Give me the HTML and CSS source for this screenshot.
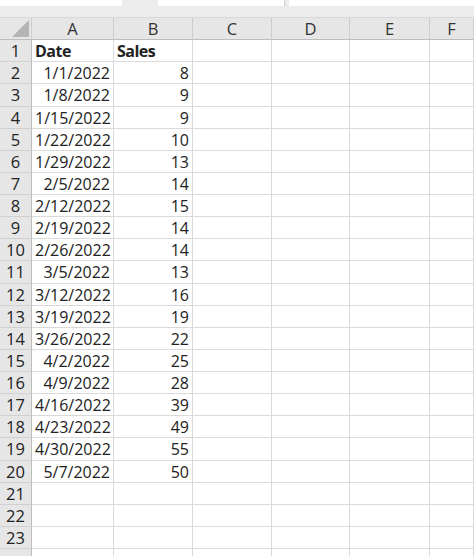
FILE: index.html
```html
<!DOCTYPE html>
<html lang="en">
<head>
    <meta charset="UTF-8">
    <meta name="viewport" content="width=device-width, initial-scale=1.0">
    <title>Sheet1</title>
    <link rel="stylesheet" href="styles.css">
</head>
<body>
    <div class="tabs">
        <div class="tab tab-name"></div>
        <div class="tab tab-formula"></div>
        <div class="tab tab-rest"></div>
    </div>

    <div class="sheet">
        <div class="row head">
            <div class="corner"><span class="tri"></span></div>
            <div class="col">A</div><div class="col">B</div><div class="col">C</div><div class="col">D</div><div class="col">E</div><div class="col">F</div>
        </div>
        <div class="row"><div class="num">1</div><div class="cell bold">Date</div><div class="cell bold">Sales</div><div class="cell"></div><div class="cell"></div><div class="cell"></div><div class="cell"></div></div>
        <div class="row"><div class="num">2</div><div class="cell r">1/1/2022</div><div class="cell r">8</div><div class="cell"></div><div class="cell"></div><div class="cell"></div><div class="cell"></div></div>
        <div class="row"><div class="num">3</div><div class="cell r">1/8/2022</div><div class="cell r">9</div><div class="cell"></div><div class="cell"></div><div class="cell"></div><div class="cell"></div></div>
        <div class="row"><div class="num">4</div><div class="cell r">1/15/2022</div><div class="cell r">9</div><div class="cell"></div><div class="cell"></div><div class="cell"></div><div class="cell"></div></div>
        <div class="row"><div class="num">5</div><div class="cell r">1/22/2022</div><div class="cell r">10</div><div class="cell"></div><div class="cell"></div><div class="cell"></div><div class="cell"></div></div>
        <div class="row"><div class="num">6</div><div class="cell r">1/29/2022</div><div class="cell r">13</div><div class="cell"></div><div class="cell"></div><div class="cell"></div><div class="cell"></div></div>
        <div class="row"><div class="num">7</div><div class="cell r">2/5/2022</div><div class="cell r">14</div><div class="cell"></div><div class="cell"></div><div class="cell"></div><div class="cell"></div></div>
        <div class="row"><div class="num">8</div><div class="cell r">2/12/2022</div><div class="cell r">15</div><div class="cell"></div><div class="cell"></div><div class="cell"></div><div class="cell"></div></div>
        <div class="row"><div class="num">9</div><div class="cell r">2/19/2022</div><div class="cell r">14</div><div class="cell"></div><div class="cell"></div><div class="cell"></div><div class="cell"></div></div>
        <div class="row"><div class="num">10</div><div class="cell r">2/26/2022</div><div class="cell r">14</div><div class="cell"></div><div class="cell"></div><div class="cell"></div><div class="cell"></div></div>
        <div class="row"><div class="num">11</div><div class="cell r">3/5/2022</div><div class="cell r">13</div><div class="cell"></div><div class="cell"></div><div class="cell"></div><div class="cell"></div></div>
        <div class="row"><div class="num">12</div><div class="cell r">3/12/2022</div><div class="cell r">16</div><div class="cell"></div><div class="cell"></div><div class="cell"></div><div class="cell"></div></div>
        <div class="row"><div class="num">13</div><div class="cell r">3/19/2022</div><div class="cell r">19</div><div class="cell"></div><div class="cell"></div><div class="cell"></div><div class="cell"></div></div>
        <div class="row"><div class="num">14</div><div class="cell r">3/26/2022</div><div class="cell r">22</div><div class="cell"></div><div class="cell"></div><div class="cell"></div><div class="cell"></div></div>
        <div class="row"><div class="num">15</div><div class="cell r">4/2/2022</div><div class="cell r">25</div><div class="cell"></div><div class="cell"></div><div class="cell"></div><div class="cell"></div></div>
        <div class="row"><div class="num">16</div><div class="cell r">4/9/2022</div><div class="cell r">28</div><div class="cell"></div><div class="cell"></div><div class="cell"></div><div class="cell"></div></div>
        <div class="row"><div class="num">17</div><div class="cell r">4/16/2022</div><div class="cell r">39</div><div class="cell"></div><div class="cell"></div><div class="cell"></div><div class="cell"></div></div>
        <div class="row"><div class="num">18</div><div class="cell r">4/23/2022</div><div class="cell r">49</div><div class="cell"></div><div class="cell"></div><div class="cell"></div><div class="cell"></div></div>
        <div class="row"><div class="num">19</div><div class="cell r">4/30/2022</div><div class="cell r">55</div><div class="cell"></div><div class="cell"></div><div class="cell"></div><div class="cell"></div></div>
        <div class="row"><div class="num">20</div><div class="cell r">5/7/2022</div><div class="cell r">50</div><div class="cell"></div><div class="cell"></div><div class="cell"></div><div class="cell"></div></div>
        <div class="row"><div class="num">21</div><div class="cell"></div><div class="cell"></div><div class="cell"></div><div class="cell"></div><div class="cell"></div><div class="cell"></div></div>
        <div class="row"><div class="num">22</div><div class="cell"></div><div class="cell"></div><div class="cell"></div><div class="cell"></div><div class="cell"></div><div class="cell"></div></div>
        <div class="row"><div class="num">23</div><div class="cell"></div><div class="cell"></div><div class="cell"></div><div class="cell"></div><div class="cell"></div><div class="cell"></div></div>
        <div class="row"><div class="num"></div><div class="cell"></div><div class="cell"></div><div class="cell"></div><div class="cell"></div><div class="cell"></div><div class="cell"></div></div>
    </div>
</body>
</html>
```

FILE: styles.css
```css
body, html {
    margin: 0;
    padding: 0;
    height: 100%;
    overflow: hidden;
    background-color: #ffffff;
    font-family: "Open Sans", Arial, sans-serif;
    color: #222222;
}

/* strip left of the formula bar */
.tabs {
    display: flex;
    height: 18px;
    background-color: #ececec;
    box-sizing: border-box;
    border-bottom: 1px solid #d8d8d8;
}

.tab {
    height: 6px;
    background-color: #ffffff;
}

.tab-name {
    width: 122px;
    margin-right: 36px;
}

.tab-formula {
    width: 126px;
    margin-right: 4px;
    border-right: 1px solid #cfcfcf;
}

.tab-rest {
    flex: 1;
}

.sheet {
    display: flex;
    flex-direction: column;
}

.row {
    display: grid;
    grid-template-columns: 32px 82px 79px 79px 78px 80px 1fr;
    height: 22.13px;
}

.row > div {
    box-sizing: border-box;
    border-right: 1px solid #dadada;
    border-bottom: 1px solid #dadada;
    font-size: 16px;
    line-height: 22px;
    white-space: nowrap;
    overflow: hidden;
}

.head > div {
    background-color: #e6e6e6;
    border-bottom: 1px solid #bdbdbd;
    border-right: 1px solid #cdcdcd;
    font-size: 16.5px;
}

.col {
    text-align: center;
    color: #333333;
}

.corner {
    position: relative;
}

.tri {
    position: absolute;
    right: 2px;
    bottom: 2px;
    width: 0;
    height: 0;
    border-left: 17px solid transparent;
    border-bottom: 17px solid #b4b4b4;
}

.row > .num {
    background-color: #e6e6e6;
    border-right: 1px solid #bdbdbd;
    border-bottom: 1px solid #d0d0d0;
    text-align: center;
    color: #222222;
    font-size: 16.5px;
}

.cell {
    padding: 0 3px;
}

.r {
    text-align: right;
}

.bold {
    font-weight: bold;
    letter-spacing: -0.5px;
}
```
